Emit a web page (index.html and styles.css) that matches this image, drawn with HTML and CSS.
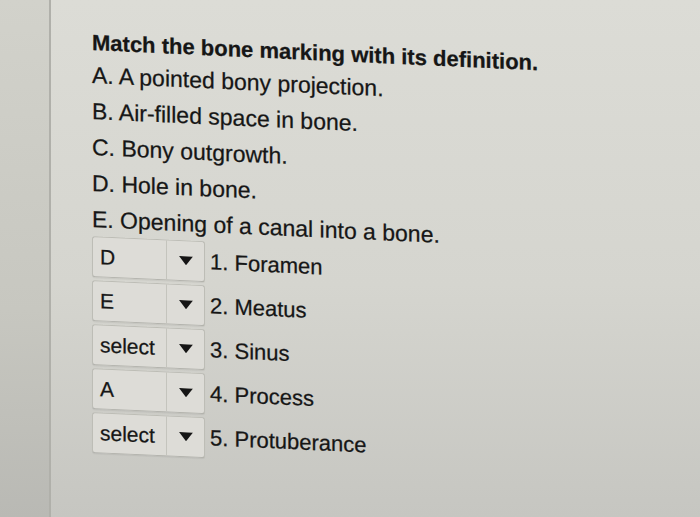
FILE: index.html
```html
<!DOCTYPE html>
<html lang="en">
<head>
  <meta charset="UTF-8">
  <title>Match the bone marking</title>
  <link rel="stylesheet" href="styles.css">
</head>
<body>
  <div class="edge"></div>
  <div class="page">
    <div class="quiz">
      <p class="titulo">Match the bone marking with its definition.</p>
      <ul class="defs">
        <li>A. A pointed bony projection.</li>
        <li>B. Air-filled space in bone.</li>
        <li>C. Bony outgrowth.</li>
        <li>D. Hole in bone.</li>
        <li>E. Opening of a canal into a bone.</li>
      </ul>
      <div class="pares">
        <div class="par">
          <div class="caixa"><span class="valor">D</span><span class="seta"><svg width="14" height="9" viewBox="0 0 14 9"><polygon points="0,0 14,0 7,9" fill="#151515"/></svg></span></div>
          <span class="termo">1. Foramen</span>
        </div>
        <div class="par">
          <div class="caixa"><span class="valor">E</span><span class="seta"><svg width="14" height="9" viewBox="0 0 14 9"><polygon points="0,0 14,0 7,9" fill="#151515"/></svg></span></div>
          <span class="termo">2. Meatus</span>
        </div>
        <div class="par">
          <div class="caixa"><span class="valor">select</span><span class="seta"><svg width="14" height="9" viewBox="0 0 14 9"><polygon points="0,0 14,0 7,9" fill="#151515"/></svg></span></div>
          <span class="termo">3. Sinus</span>
        </div>
        <div class="par">
          <div class="caixa"><span class="valor">A</span><span class="seta"><svg width="14" height="9" viewBox="0 0 14 9"><polygon points="0,0 14,0 7,9" fill="#151515"/></svg></span></div>
          <span class="termo">4. Process</span>
        </div>
        <div class="par">
          <div class="caixa"><span class="valor">select</span><span class="seta"><svg width="14" height="9" viewBox="0 0 14 9"><polygon points="0,0 14,0 7,9" fill="#151515"/></svg></span></div>
          <span class="termo">5. Protuberance</span>
        </div>
      </div>
    </div>
  </div>
</body>
</html>
```

FILE: styles.css
```css
body {
  margin: 0;
  height: 517px;
  overflow: hidden;
  display: flex;
  font-family: 'Liberation Sans', Arial, sans-serif;
  color: #161616;
  -webkit-text-stroke: 0.25px #161616;
  background: linear-gradient(180deg, #dcdcd6 0%, #d5d5cf 55%, #c6c6c1 100%);
}
.edge {
  width: 49px;
  flex: none;
  background: linear-gradient(180deg, #d2d2cb 0%, #c7c7c0 60%, #b9b9b4 100%);
  border-right: 2px solid #b0b0aa;
}
.page {
  flex: 1;
  padding: 29px 0 0 41px;
}
/* a foto tem o texto um pouco inclinado */
.quiz {
  transform: skewY(2.6deg);
  transform-origin: left top;
}
.titulo {
  margin: 0;
  font-size: 22px;
  font-weight: bold;
  line-height: 28px;
}
.defs {
  list-style: none;
  margin: 0;
  padding: 0;
  font-size: 23px;
  line-height: 36px;
}
.pares {
  display: flex;
  flex-direction: column;
  gap: 3px;
  margin-top: -1px;
}
.par {
  display: flex;
  align-items: center;
  gap: 5px;
}
.caixa {
  display: flex;
  width: 111px;
  height: 39px;
  background: #dddcd7;
  border: 1px solid #bdbdb6;
  border-bottom-color: #b3b3ad;
  border-radius: 3px;
  box-shadow: 0 1px 1px rgba(0, 0, 0, 0.06);
}
.valor {
  width: 66px;
  padding-left: 7px;
  font-size: 21px;
  line-height: 39px;
  border-right: 1px solid #c4c4bd;
}
.seta {
  flex: 1;
  display: flex;
  align-items: center;
  justify-content: center;
}
.termo {
  font-size: 22px;
}
```
